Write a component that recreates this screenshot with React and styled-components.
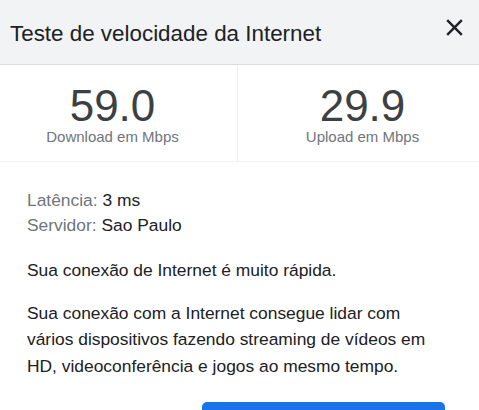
import React from "react";
import styled, { createGlobalStyle } from "styled-components";

const Global = createGlobalStyle`
  html, body { margin: 0; padding: 0; background: #ffffff; }
  body { font-family: "Liberation Sans", Arial, sans-serif; }
`;

const Dialog = styled.div`
  width: 479px;
  height: 410px;
  overflow: hidden;
  background: #ffffff;
`;

const Header = styled.header`
  box-sizing: border-box;
  height: 65px;
  padding: 20px 16px 0 10px;
  background: #f1f3f4;
  border-bottom: 1px solid #dadce0;
  display: flex;
  justify-content: space-between;
  align-items: flex-start;
`;

const Title = styled.h1`
  margin: 0;
  font-size: 22.4px;
  line-height: 28px;
  font-weight: 400;
  color: #202124;
`;

const CloseButton = styled.button`
  border: 0;
  padding: 0;
  margin: -1px 0 0 0;
  background: transparent;
  width: 17px;
  height: 17px;
  display: flex;
  cursor: pointer;
`;

const Stats = styled.section`
  display: grid;
  grid-template-columns: 238px 1fr;
  border-bottom: 1px solid #f1f1f1;
`;

const Stat = styled.div`
  box-sizing: border-box;
  height: 96px;
  padding: 19px ${(p) => (p.$first ? "12px" : "0")} 0 ${(p) => (p.$first ? "0" : "8px")};
  text-align: center;
  border-right: ${(p) => (p.$first ? "1px solid #ececec" : "none")};
`;

const Value = styled.div`
  font-size: 44px;
  line-height: 44px;
  color: #3c4043;
`;

const Label = styled.div`
  font-size: 15px;
  line-height: 18px;
  color: #70757a;
`;

const Body = styled.div`
  padding: 26px 34px 0 27px;
  display: flex;
  flex-direction: column;
`;

const InfoList = styled.div`
  font-size: 17.4px;
  line-height: 25px;
  color: #202124;
`;

const InfoKey = styled.span`
  color: #70757a;
`;

const Paragraph = styled.p`
  margin: ${(p) => p.$mt} 0 0 0;
  font-size: 17.4px;
  line-height: 26.67px;
  color: #202124;
`;

const Actions = styled.div`
  display: flex;
  justify-content: flex-end;
  margin-top: 22px;
`;

const PrimaryButton = styled.button`
  width: 243px;
  height: 40px;
  border: 0;
  border-radius: 5px;
  background: #1a73e8;
`;

export default function App() {
  return (
    <>
      <Global />
      <Dialog>
        <Header>
          <Title>Teste de velocidade da Internet</Title>
          <CloseButton aria-label="Fechar">
            <svg width="17" height="17" viewBox="0 0 17 17">
              <path
                d="M1.2 1.2 L15.8 15.8 M15.8 1.2 L1.2 15.8"
                stroke="#202124"
                strokeWidth="2.4"
                fill="none"
              />
            </svg>
          </CloseButton>
        </Header>
        <Stats>
          <Stat $first>
            <Value>59.0</Value>
            <Label>Download em Mbps</Label>
          </Stat>
          <Stat>
            <Value>29.9</Value>
            <Label>Upload em Mbps</Label>
          </Stat>
        </Stats>
        <Body>
          <InfoList>
            <div>
              <InfoKey>Latência:</InfoKey> 3 ms
            </div>
            <div>
              <InfoKey>Servidor:</InfoKey> Sao Paulo
            </div>
          </InfoList>
          <Paragraph $mt="19px">Sua conexão de Internet é muito rápida.</Paragraph>
          <Paragraph $mt="16px">
            Sua conexão com a Internet consegue lidar com vários dispositivos
            fazendo streaming de vídeos em HD, videoconferência e jogos ao mesmo
            tempo.
          </Paragraph>
          <Actions>
            <PrimaryButton />
          </Actions>
        </Body>
      </Dialog>
    </>
  );
}
